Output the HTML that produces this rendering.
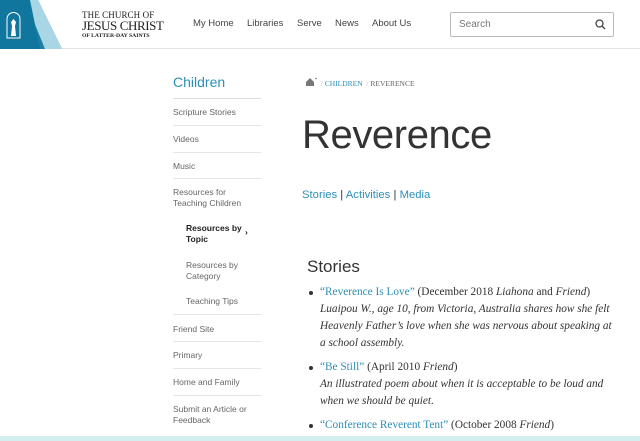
<!DOCTYPE html>
<html><head><style>
*{margin:0;padding:0;box-sizing:border-box}
body{width:640px;height:441px;overflow:hidden;background:#fff;font-family:"Liberation Sans",sans-serif;position:relative}
.hdr{position:absolute;left:0;top:0;width:640px;height:49px;border-bottom:1px solid #e4e4e4;background:#fff}
.logo{position:absolute;left:0;top:0;width:62px;height:49px}
.nm{position:absolute;left:82px;font-family:"Liberation Serif",serif;color:#222}
.nav{position:absolute;top:18px;font-size:9.5px;color:#444}
.search{position:absolute;left:450px;top:12px;width:164px;height:25px;border:1px solid #bbb;border-radius:2px;font-size:10px;color:#777;padding:6px 8px}
.side{position:absolute;left:173px;width:88px;font-size:8.5px;color:#666}
.side div{border-bottom:1px solid #e6e6e6}
.bc{position:absolute;top:77px;left:305px;font-family:"Liberation Serif",serif;font-size:7.5px;color:#666}
a{color:#2d8fb8;text-decoration:none}
ul{position:absolute;left:307px;top:284px;width:310px;font-family:"Liberation Serif",serif;font-size:11.3px;line-height:17px;color:#333;list-style:none}
li{position:relative;padding-left:13px;margin-bottom:7px}
li:before{content:"";position:absolute;left:2px;top:7px;width:4px;height:4px;border-radius:50%;background:#333}
</style></head><body>
<div class="hdr">
<svg class="logo" viewBox="0 0 62 49"><rect width="62" height="49" fill="#fff"/><polygon points="0,0 38,0 62,49 0,49" fill="#1b7fa6"/><polygon points="25,0 38,0 62,49 45,49" fill="#a9d6e5"/><polygon points="0,0 30,0 40,49 0,49" fill="#10769d"/><path d="M7 38 V19 a6.5 6.5 0 0 1 13 0 V38 Z" fill="none" stroke="#fff" stroke-width="1"/><path d="M11 36 l1 -10 l-1 -4 l2.5 -3 l2.5 3 l-1 4 l1 10 Z" fill="#fff"/></svg>
<div class="nm" style="top:10px;font-size:9px;letter-spacing:.1px">THE CHURCH OF</div>
<div class="nm" style="top:18px;font-size:13px;letter-spacing:-.4px">JESUS CHRIST</div>
<div class="nm" style="top:33px;font-size:5.7px;font-weight:bold">OF LATTER-DAY SAINTS</div>
<div class="nav" style="left:193px">My Home</div>
<div class="nav" style="left:247px">Libraries</div>
<div class="nav" style="left:297px">Serve</div>
<div class="nav" style="left:335px">News</div>
<div class="nav" style="left:372px">About Us</div>
<div class="search">Search<svg style="position:absolute;right:7px;top:6px" width="11" height="11" viewBox="0 0 11 11"><circle cx="4.5" cy="4.5" r="3.5" fill="none" stroke="#444" stroke-width="1.3"/><line x1="7" y1="7" x2="10" y2="10" stroke="#444" stroke-width="1.3"/></svg></div>
</div>
<div class="side" style="top:74px">
<div style="font-size:14px;color:#2d8fb8;height:25px;border-bottom:1px solid #ddd">Children</div>
<div style="height:27px;padding-top:8px">Scripture Stories</div>
<div style="height:27px;padding-top:8px">Videos</div>
<div style="height:26px;padding-top:8px">Music</div>
<div style="height:39px;padding-top:8px;line-height:11px;border:none">Resources for<br>Teaching Children</div>
<div style="height:37px;padding:5px 0 0 13px;line-height:11px;color:#222;font-weight:bold;border:none;position:relative">Resources by<br>Topic<span style="position:absolute;left:72px;top:9px">›</span></div>
<div style="height:36px;padding:5px 0 0 13px;line-height:11px;border:none">Resources by<br>Category</div>
<div style="height:24px;padding:5px 0 0 13px">Teaching Tips</div>
<div style="height:27px;padding-top:9px">Friend Site</div>
<div style="height:27px;padding-top:8px">Primary</div>
<div style="height:27px;padding-top:8px">Home and Family</div>
<div style="height:41px;padding-top:8px;line-height:11px">Submit an Article or<br>Feedback</div>
</div>
<div class="bc"><svg width="12" height="9" viewBox="0 0 12 9"><path d="M1 5 L5 1 L9 5 V9 H1Z" fill="#777"/><circle cx="11" cy="1.5" r=".8" fill="#777"/></svg> &nbsp;<span style="color:#bbb">/</span> <a>CHILDREN</a> &nbsp;<span style="color:#bbb">/</span> REVERENCE</div>
<div style="position:absolute;left:302px;top:113px;font-size:40px;color:#333;letter-spacing:-.4px">Reverence</div>
<div style="position:absolute;left:302px;top:189px;font-size:11.3px;color:#333"><a>Stories</a> | <a>Activities</a> | <a>Media</a></div>
<div style="position:absolute;left:307px;top:257px;font-size:17px;color:#333">Stories</div>
<ul>
<li><a>“Reverence Is Love”</a> (December 2018 <i>Liahona</i> and <i>Friend</i>)<br><i>Luaipou W., age 10, from Victoria, Australia shares how she felt Heavenly Father’s love when she was nervous about speaking at a school assembly.</i></li>
<li><a>“Be Still”</a> (April 2010 <i>Friend</i>)<br><i>An illustrated poem about when it is acceptable to be loud and when we should be quiet.</i></li>
<li><a>“Conference Reverent Tent”</a> (October 2008 <i>Friend</i>)</li>
</ul>
<div style="position:absolute;left:0;top:436px;width:640px;height:5px;background:#d3eeee"></div>
</body></html>
